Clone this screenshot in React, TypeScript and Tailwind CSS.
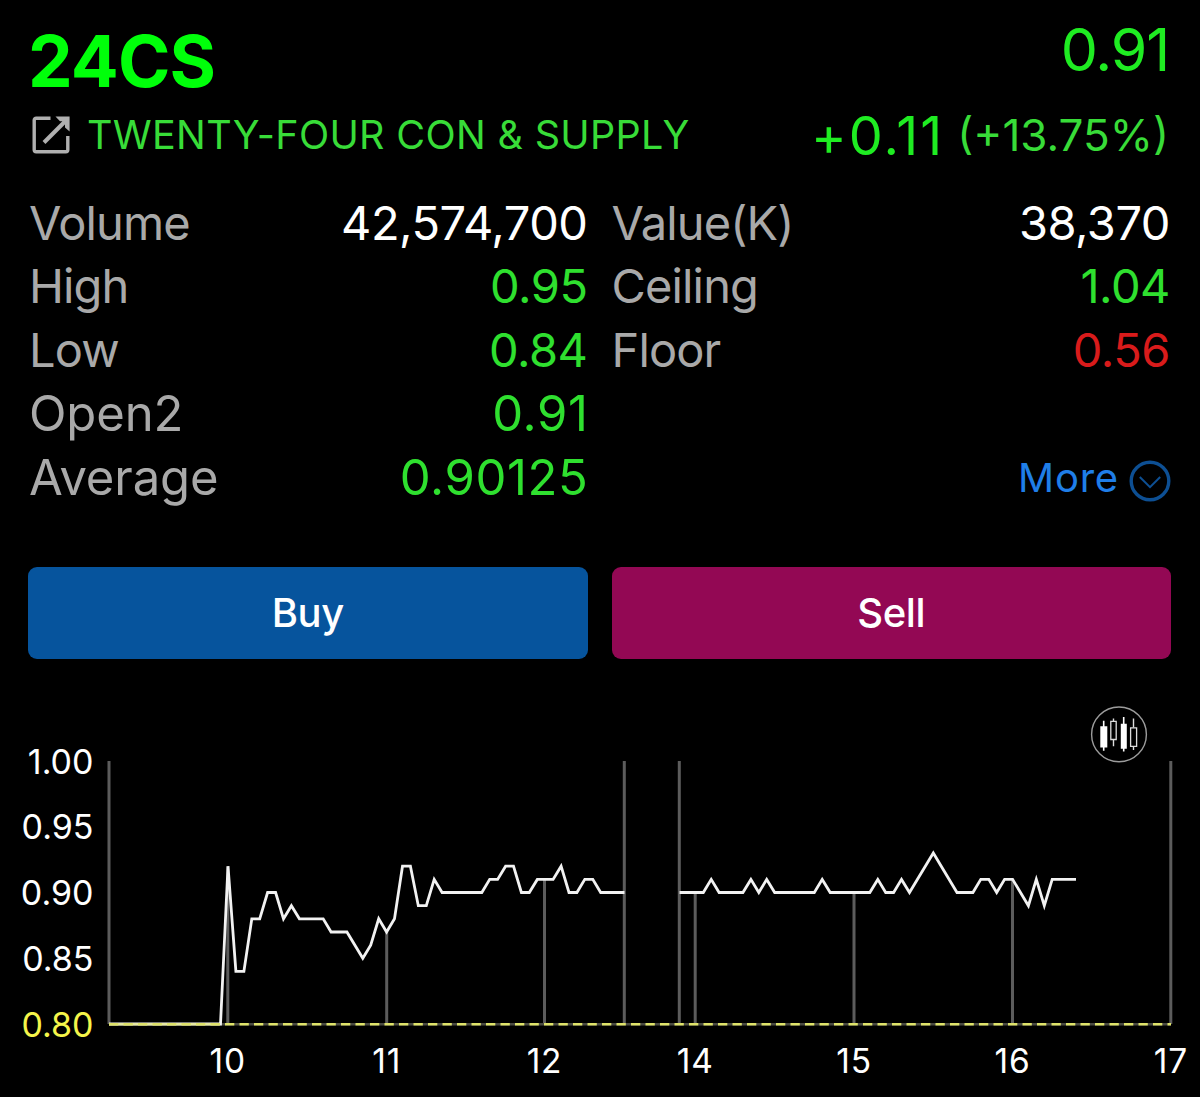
import type { ReactNode } from "react";

type Point = [step: number, price: number];

// One step is three minutes of trading.
const STEP = 7.93;
const TOP = 761;
const BASE = 1024;

const morning: Point[] = [
  [0, 0.92], [1, 0.84], [2, 0.84], [3, 0.88], [4, 0.88], [5, 0.9], [6, 0.9], [7, 0.88],
  [8, 0.89], [9, 0.88], [12, 0.88], [13, 0.87], [15, 0.87], [17, 0.85], [18, 0.86],
  [19, 0.88], [20, 0.87], [21, 0.88], [22, 0.92], [23, 0.92], [24, 0.89], [25, 0.89],
  [26, 0.91], [27, 0.9], [32, 0.9], [33, 0.91], [34, 0.91], [35, 0.92], [36, 0.92],
  [37, 0.9], [38, 0.9], [39, 0.91], [41, 0.91], [42, 0.92], [43, 0.9], [44, 0.9],
  [45, 0.91], [46, 0.91], [47, 0.9], [50, 0.9],
];

const afternoon: Point[] = [
  [0, 0.9], [3, 0.9], [4, 0.91], [5, 0.9], [8, 0.9], [9, 0.91], [10, 0.9], [11, 0.91],
  [12, 0.9], [17, 0.9], [18, 0.91], [19, 0.9], [24, 0.9], [25, 0.91], [26, 0.9],
  [27, 0.9], [28, 0.91], [29, 0.9], [32, 0.93], [35, 0.9], [37, 0.9], [38, 0.91],
  [39, 0.91], [40, 0.9], [41, 0.91], [42, 0.91], [44, 0.89], [45, 0.91], [46, 0.89],
  [47, 0.91], [50, 0.91],
];

const priceY = (price: number) => BASE - (price - 0.8) * 1315;

const toPoints = (data: Point[], start: number) =>
  data.map(([step, price]) => `${(start + step * STEP).toFixed(1)},${priceY(price).toFixed(1)}`).join(" ");

const sessionLines = [109, 624.3, 679.3, 1170.8];

const hours = [
  { label: "10", x: 227.8, price: 0.92 },
  { label: "11", x: 386.7, price: 0.87 },
  { label: "12", x: 544.5, price: 0.91 },
  { label: "14", x: 695.2, price: 0.9 },
  { label: "15", x: 854, price: 0.9 },
  { label: "16", x: 1012.5, price: 0.91 },
];

function Stat({ label, value, color, big }: { label: string; value: string; color: string; big?: boolean }) {
  return (
    <div className={`flex h-[63.75px] items-center justify-between ${big ? "text-[49px]" : "text-[47px]"}`}>
      <span className={`-ml-px text-[#a9a9a9] ${big ? "tracking-[-0.002em]" : "tracking-[-0.018em]"}`}>{label}</span>
      <span className={`${color} ${big ? "-mr-px tracking-[0.013em]" : "tracking-[-0.01em]"}`}>{value}</span>
    </div>
  );
}

function OpenIcon() {
  return (
    <svg width="38" height="38" viewBox="0 0 38 38" fill="none" stroke="#b0b0b0" strokeWidth="3.4">
      <path d="M18.5 2.2H4.2a2 2 0 0 0-2 2v29.6a2 2 0 0 0 2 2h29.6a2 2 0 0 0 2-2V20" />
      <path d="M12 26.5 33 5.5" strokeWidth="4" />
      <path d="M23.5 .6H37.6V15.5L33 11.5V8L30 5.2H28Z" fill="#b0b0b0" stroke="none" />
    </svg>
  );
}

function MoreIcon() {
  return (
    <svg className="mt-[6px] -mr-px" width="42" height="42" viewBox="0 0 42 42" fill="none" stroke="#0d4f93">
      <circle cx="21" cy="21" r="18.8" strokeWidth="3.4" />
      <path d="M10.8 17 21 27.2 31.2 17" strokeWidth="2" />
    </svg>
  );
}

function CandleIcon() {
  return (
    <svg width="58" height="58" viewBox="0 0 58 58" fill="none" stroke="#fff">
      <circle cx="29" cy="29.4" r="27.4" stroke="#9c9c9c" strokeWidth="1.4" />
      <path d="M13.7 15.7v30M33.7 12v34.5" strokeWidth="1.6" />
      <path d="M10.3 21.2h7v21.3h-7zM30.8 18.7h6v25h-6z" fill="#fff" stroke="none" />
      <path d="M23.5 13.5v3M23.5 34.8v6.5M43.5 13.5v9M43.5 41.5v3.5" stroke="#ddd" strokeWidth="1.4" />
      <path d="M20.8 16.3h5.4v18.2h-5.4zM40.6 22.8h6v18.6h-6z" stroke="#ddd" strokeWidth="1.3" />
    </svg>
  );
}

function ActionButton({ className, children }: { className: string; children: ReactNode }) {
  return (
    <button className={`h-[92px] flex-1 rounded-[9px] text-[40px] font-medium tracking-[-0.01em] text-white ${className}`}>
      {children}
    </button>
  );
}

function PriceChart() {
  return (
    <svg className="block" width="1200" height="367" viewBox="0 730 1200 367" fill="none">
      <g stroke="#5c5c5c" strokeWidth="3">
        {sessionLines.map((x) => (
          <line key={x} x1={x} x2={x} y1={TOP} y2={BASE} />
        ))}
        {hours.map(({ label, x, price }) => (
          <line key={label} x1={x} x2={x} y1={priceY(price)} y2={BASE} />
        ))}
      </g>
      <line x1="109" x2="1171" y1={BASE + 0.3} y2={BASE + 0.3} stroke="#4a4a42" strokeWidth="2.6" />
      <polyline
        points={`109,${BASE} 220.5,${BASE} ${toPoints(morning, 228)}`}
        stroke="#f2f2f2"
        strokeWidth="2.8"
      />
      <polyline points={toPoints(afternoon, 679.5)} stroke="#f2f2f2" strokeWidth="2.8" />
      <line x1="109" x2="220" y1={BASE + 0.2} y2={BASE + 0.2} stroke="#dfe36a" strokeWidth="2.4" strokeOpacity="0.6" />
      <line
        x1="109"
        x2="1171"
        y1={BASE + 0.2}
        y2={BASE + 0.2}
        stroke="#dfe36a"
        strokeWidth="2.4"
        strokeDasharray="9.3 5.2"
      />
      <g fontSize="34" fill="#fff" textAnchor="end">
        {["1.00", "0.95", "0.90", "0.85"].map((label) => (
          <text key={label} x="93.5" y={priceY(Number(label)) + 12.7}>
            {label}
          </text>
        ))}
        <text x="93.5" y={BASE + 13} fill="#f5f54a">
          0.80
        </text>
      </g>
      <g fontSize="33.5" fill="#fff" textAnchor="middle" letterSpacing="0.8">
        {hours.map(({ label, x }) => (
          <text key={label} x={x} y="1072.7">
            {label}
          </text>
        ))}
        <text x="1170.8" y="1072.7">
          17
        </text>
      </g>
    </svg>
  );
}

export default function App() {
  return (
    <main className="h-[1097px] w-[1200px] overflow-hidden bg-black font-['Inter',sans-serif] font-normal whitespace-nowrap">
      <header className="pt-[19px] pr-[31px] pl-[30px] text-[#1fec22]">
        <div className="flex h-[84px] items-start justify-between">
          <h1 className="-ml-[2px] text-[71px] leading-[84px] font-bold tracking-[-0.012em] text-[#00ff0a]">24CS</h1>
          <span className="text-[59px] leading-[62px] tracking-[-0.02em]">0.91</span>
        </div>
        <div className="flex h-[64px] items-center justify-between">
          <div className="flex items-center gap-[17px] pl-[2px]">
            <OpenIcon />
            <span className="pt-px text-[39.5px] tracking-[0.008em] text-[#38dc38]">TWENTY-FOUR CON &amp; SUPPLY</span>
          </div>
          <div className="flex items-center gap-[13px]">
            <span className="text-[54px] tracking-[0.037em]">+0.11</span>
            <span className="text-[44px] text-[#38dc38]">(+13.75%)</span>
          </div>
        </div>
      </header>

      <section className="mt-[24px] grid grid-cols-2 gap-[25px] pr-[30px] pl-[30px]">
        <div>
          <Stat label="Volume" value="42,574,700" color="text-white" />
          <Stat label="High" value="0.95" color="text-[#2fe02f]" />
          <Stat label="Low" value="0.84" color="text-[#2fe02f]" />
          <Stat label="Open2" value="0.91" color="text-[#2fe02f]" big />
          <Stat label="Average" value="0.90125" color="text-[#2fe02f]" big />
        </div>
        <div>
          <Stat label="Value(K)" value="38,370" color="text-white" />
          <Stat label="Ceiling" value="1.04" color="text-[#2fe02f]" />
          <Stat label="Floor" value="0.56" color="text-[#d91b1b]" />
          <div className="mt-[63.75px] flex h-[63.75px] items-center justify-end gap-[10px] text-[40px] tracking-[0.02em] text-[#1f7ee8]">
            More
            <MoreIcon />
          </div>
        </div>
      </section>

      <section className="mt-[56.75px] flex gap-[24px] pr-[29px] pl-[28px]">
        <ActionButton className="bg-[#06549d]">Buy</ActionButton>
        <ActionButton className="bg-[#930854]">Sell</ActionButton>
      </section>

      <section className="mt-[46px]">
        <div className="-mb-[33px] flex justify-end pr-[52px]">
          <CandleIcon />
        </div>
        <PriceChart />
      </section>
    </main>
  );
}
